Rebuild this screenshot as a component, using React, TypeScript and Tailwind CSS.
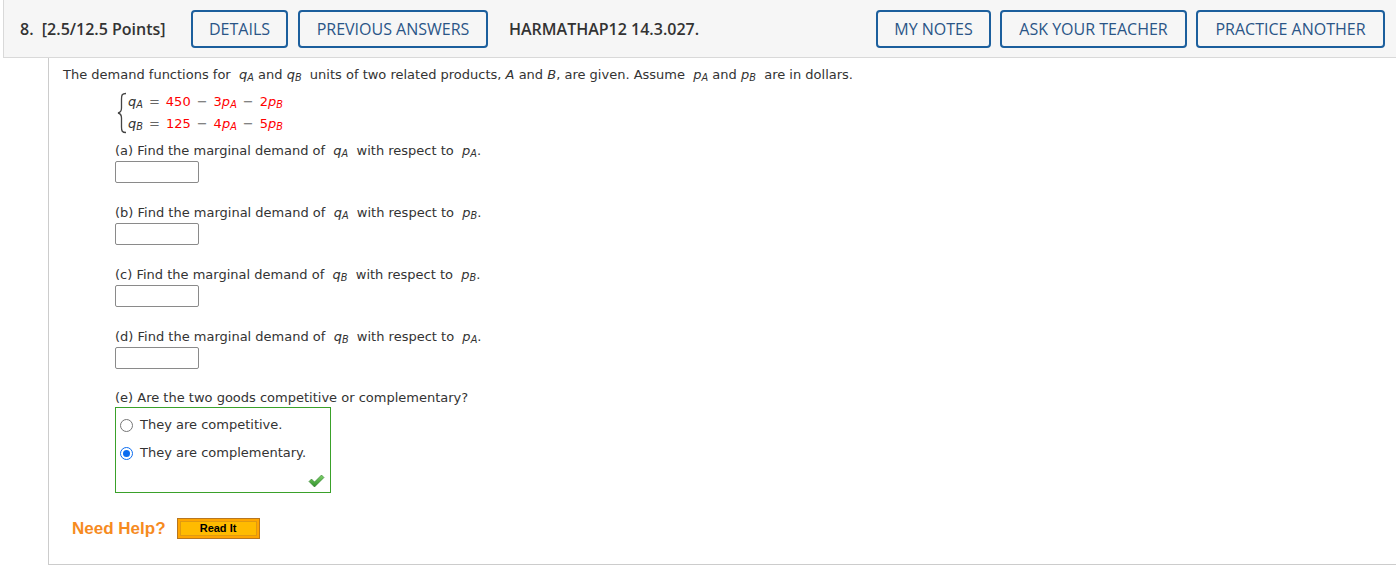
const body = "font-['DejaVu_Sans','Verdana',sans-serif]";

function V({ v, sub }: { v: string; sub: string }) {
  return (
    <span className="italic">
      {v}
      <sub className="italic">{sub}</sub>
    </span>
  );
}

function HeaderButton({ label, w }: { label: string; w: string }) {
  return (
    <div className={`${w} h-[38px] shrink-0 border-2 border-[#1c5f9d] rounded-[4px] flex items-center justify-center text-[16px] text-[#2a5587]`}>
      {label}
    </div>
  );
}

function Question({ label, q, p }: { label: string; q: string; p: string }) {
  return (
    <div className="mb-[22px]">
      <div className="h-4 leading-4">
        ({label}) Find the marginal demand of&nbsp; <V v="q" sub={q} />&nbsp; with respect to&nbsp; <V v="p" sub={p} />.
      </div>
      <div className="mt-[2px] w-[84px] h-[22px] border border-[#8a8a8a] rounded-[2px] bg-white" />
    </div>
  );
}

function Brace() {
  return (
    <svg width="10" height="42" viewBox="0 0 10 42" className="shrink-0">
      <path d="M9 1.5 C5 1.5 4.5 3 4.5 7 L4.5 16 C4.5 19.5 3.5 20.5 1 21 C3.5 21.5 4.5 22.5 4.5 26 L4.5 35 C4.5 39 5 40.5 9 40.5" fill="none" stroke="#444" strokeWidth="1.3" />
    </svg>
  );
}

function Op({ c }: { c: string }) {
  return <span className="mx-[6px] text-[#666]">{c}</span>;
}

export default function App() {
  return (
    <div className="w-[1396px] h-[567px] bg-white overflow-hidden">
      {/* header */}
      <div className="ml-[3px] h-[58px] bg-[#f6f6f6] border-l border-b border-[#d9d9d9] flex items-center font-['Open_Sans',sans-serif]">
        <div className="ml-[16px] w-[171px] text-[16px] font-semibold text-[#333] whitespace-nowrap">
          8.&nbsp; [2.5/12.5 Points]
        </div>
        <HeaderButton label="DETAILS" w="w-[97px]" />
        <div className="w-[10px]" />
        <HeaderButton label="PREVIOUS ANSWERS" w="w-[190px]" />
        <div className="ml-[21px] text-[16px] font-semibold text-[#333]">HARMATHAP12 14.3.027.</div>
        <div className="flex-1" />
        <div className="flex gap-[9px] mr-[11px]">
          <HeaderButton label="MY NOTES" w="w-[115px]" />
          <HeaderButton label="ASK YOUR TEACHER" w="w-[187px]" />
          <HeaderButton label="PRACTICE ANOTHER" w="w-[189px]" />
        </div>
      </div>

      {/* question panel */}
      <div className={`ml-[48px] h-[507px] border-l border-b border-[#cccccc] pl-[14px] pt-[9px] text-[13px] text-[#333] ${body}`}>
        <div className="h-4 leading-4">
          The demand functions for&nbsp; <V v="q" sub="A" /> and <V v="q" sub="B" />&nbsp; units of two related products, <span className="italic">A</span> and <span className="italic">B</span>, are given. Assume&nbsp; <V v="p" sub="A" /> and <V v="p" sub="B" />&nbsp; are in dollars.
        </div>

        <div className="ml-[54px] mt-[9px] flex items-center">
          <Brace />
          <div className="ml-[1px] flex flex-col gap-[6px]">
            <div className="h-4 leading-4 flex items-center">
              <V v="q" sub="A" />
              <Op c="=" />
              <span className="text-[#ff0000]">450</span>
              <Op c="−" />
              <span className="text-[#ff0000]">3<V v="p" sub="A" /></span>
              <Op c="−" />
              <span className="text-[#ff0000]">2<V v="p" sub="B" /></span>
            </div>
            <div className="h-4 leading-4 flex items-center">
              <V v="q" sub="B" />
              <Op c="=" />
              <span className="text-[#ff0000]">125</span>
              <Op c="−" />
              <span className="text-[#ff0000]">4<V v="p" sub="A" /></span>
              <Op c="−" />
              <span className="text-[#ff0000]">5<V v="p" sub="B" /></span>
            </div>
          </div>
        </div>

        <div className="ml-[52px] mt-[9px]">
          <Question label="a" q="A" p="A" />
          <Question label="b" q="A" p="B" />
          <Question label="c" q="B" p="B" />
          <Question label="d" q="B" p="A" />

          <div className="h-4 leading-4 -mt-[1px]">(e) Are the two goods competitive or complementary?</div>
          <div className="mt-[1px] w-[216px] h-[86px] border border-[#3aa12a] pl-[4px] pt-[9px] flex flex-col">
            <label className="flex items-center h-4">
              <span className="w-[13px] h-[13px] rounded-full border border-[#767676] bg-white" />
              <span className="ml-[7px]">They are competitive.</span>
            </label>
            <label className="flex items-center h-4 mt-[12px]">
              <span className="w-[13px] h-[13px] rounded-full border-[1.5px] border-[#0b6cf0] bg-white flex items-center justify-center">
                <span className="w-[7px] h-[7px] rounded-full bg-[#0b6cf0]" />
              </span>
              <span className="ml-[7px]">They are complementary.</span>
            </label>
            <div className="flex-1 flex items-end justify-end pr-[5px] pb-[4px]">
              <svg width="17" height="14" viewBox="0 0 17 14">
                <defs>
                  <linearGradient id="ck" x1="0" y1="0" x2="0" y2="1">
                    <stop offset="0" stopColor="#7fd36a" />
                    <stop offset="1" stopColor="#2f8f2a" />
                  </linearGradient>
                </defs>
                <path d="M1 7.5 L3.5 5 L6.5 8 L13.5 1 L16 3.5 L6.5 13 Z" fill="url(#ck)" stroke="#2a7a25" strokeWidth="0.6" />
              </svg>
            </div>
          </div>
        </div>

        <div className="ml-[9px] mt-[23px] flex items-center font-['Liberation_Sans',Arial,sans-serif]">
          <span className="text-[17px] font-bold text-[#f68b1f]">Need Help?</span>
          <div className="ml-[11px] w-[83px] h-[21px] border border-[#b8761f] bg-[#ffa500] p-[2px]">
            <div className="w-full h-full bg-[#ffbb00] border border-[#e09a10] flex items-center justify-center text-[11px] font-bold text-black leading-none">
              Read It
            </div>
          </div>
        </div>
      </div>
    </div>
  );
}
